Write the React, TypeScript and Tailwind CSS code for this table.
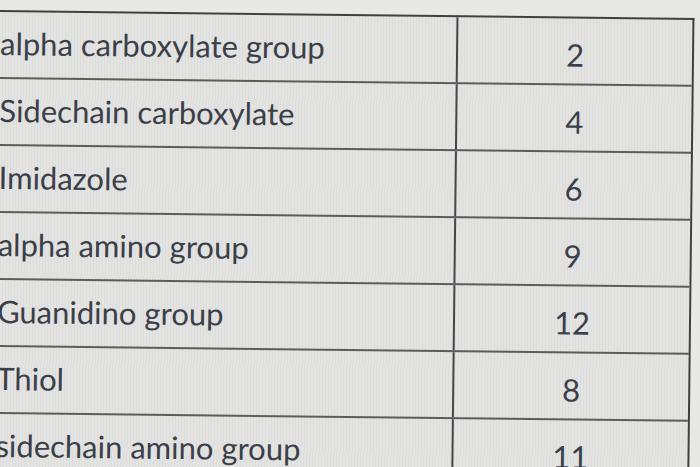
const rows: [string, string][] = [
  ['alpha carboxylate group', '2'],
  ['Sidechain carboxylate', '4'],
  ['Imidazole', '6'],
  ['alpha amino group', '9'],
  ['Guanidino group', '12'],
  ['Thiol', '8'],
  ['sidechain amino group', '11'],
]

export default function App() {
  return (
    <div
      className="w-[700px] h-[467px] overflow-hidden bg-[#e8e8e6] text-[#3a3f49]"
      style={{ fontFamily: 'Lato, "Open Sans", sans-serif' }}
    >
      <div className="pt-[14px] rotate-[0.65deg] origin-[350px_233px]">
        <div className="-ml-[20px] w-[712px] border-t-2 border-r-2 border-[#404044] bg-[repeating-linear-gradient(90deg,#e3e3e1_0px,#e3e3e1_2px,#dddddb_2px,#dddddb_3px)]">
          {rows.map(([name, value]) => (
            <div
              key={name}
              className="grid grid-cols-[474px_1fr] h-[67px] border-b-2 border-[#5c5c60]"
            >
              <div className="flex items-center pl-[18px] text-[31px] leading-none pb-[2px]">
                {name}
              </div>
              <div className="flex items-center justify-center border-l-2 border-[#47474b] text-[31px] leading-none pt-[8px]">
                {value}
              </div>
            </div>
          ))}
        </div>
      </div>
    </div>
  )
}
